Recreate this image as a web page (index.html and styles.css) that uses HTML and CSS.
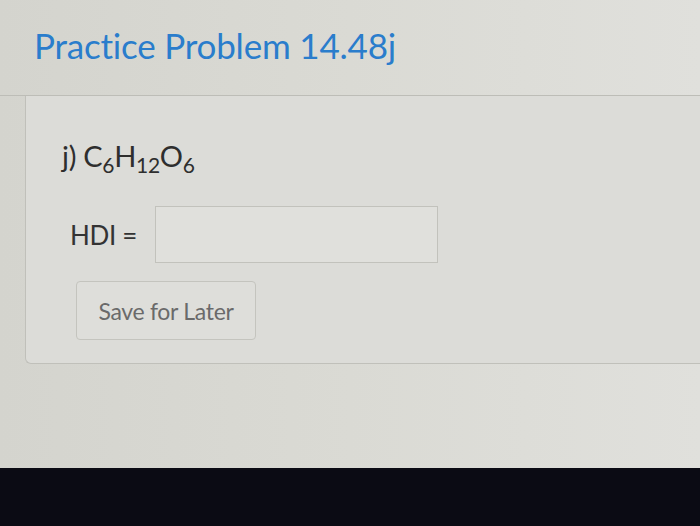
FILE: index.html
```html
<!DOCTYPE html>
<html>
<head>
<meta charset="utf-8">
<link rel="stylesheet" href="styles.css">
</head>
<body>
<div class="screen">
  <div class="header">
    <h1 class="title">Practice Problem 14.48j</h1>
  </div>
  <div class="body">
    <div class="card">
      <p class="formula">j) C<sub>6</sub>H<sub>12</sub>O<sub>6</sub></p>
      <div class="row">
        <label class="label">HDI =</label>
        <div class="input"></div>
      </div>
      <div class="button">Save for Later</div>
    </div>
  </div>
</div>
<div class="bezel"></div>
</body>
</html>
```
FILE: styles.css
```css
html, body {
  margin: 0;
  padding: 0;
}
body {
  width: 700px;
  height: 526px;
  overflow: hidden;
  background: #0b0b14;
  font-family: Lato, "Open Sans", sans-serif;
}
.screen {
  height: 468px;
  background: linear-gradient(90deg, #d4d4ce 0%, #dadad4 50%, #e0e0dc 100%);
  display: flex;
  flex-direction: column;
}
.header {
  height: 96px;
  border-bottom: 1px solid #bdbdb7;
  padding-left: 34px;
  box-sizing: border-box;
}
.title {
  margin: 0;
  padding-top: 24px;
  font-size: 35px;
  font-weight: 400;
  line-height: 42px;
  color: #2a7dcc;
  letter-spacing: -0.2px;
}
.body {
  flex: 1;
}
.card {
  margin-left: 25px;
  height: 268px;
  border-left: 1px solid #c0c0ba;
  border-bottom: 1px solid #c0c0ba;
  border-bottom-left-radius: 6px;
  background: #dcdcd8;
  box-sizing: border-box;
  padding-top: 43px;
}
.formula {
  margin: 0 0 0 36px;
  font-size: 29px;
  line-height: 34px;
  color: #2e2e2e;
  letter-spacing: -0.3px;
}
.formula sub {
  font-size: 21px;
  vertical-align: -6px;
  line-height: 0;
}
.row {
  display: flex;
  align-items: center;
  margin: 33px 0 0 44px;
}
.label {
  font-size: 26px;
  color: #333;
  width: 85px;
  letter-spacing: -0.3px;
}
.input {
  width: 283px;
  height: 57px;
  border: 1px solid #c2c2bc;
  box-sizing: border-box;
  background: #e0e0dc;
}
.button {
  margin: 18px 0 0 50px;
  width: 180px;
  height: 59px;
  border: 1px solid #c4c4be;
  border-radius: 4px;
  box-sizing: border-box;
  display: flex;
  align-items: center;
  justify-content: center;
  font-size: 23px;
  color: #6a6a6a;
  background: #dededa;
  letter-spacing: -0.3px;
}
.bezel {
  height: 58px;
}
```
